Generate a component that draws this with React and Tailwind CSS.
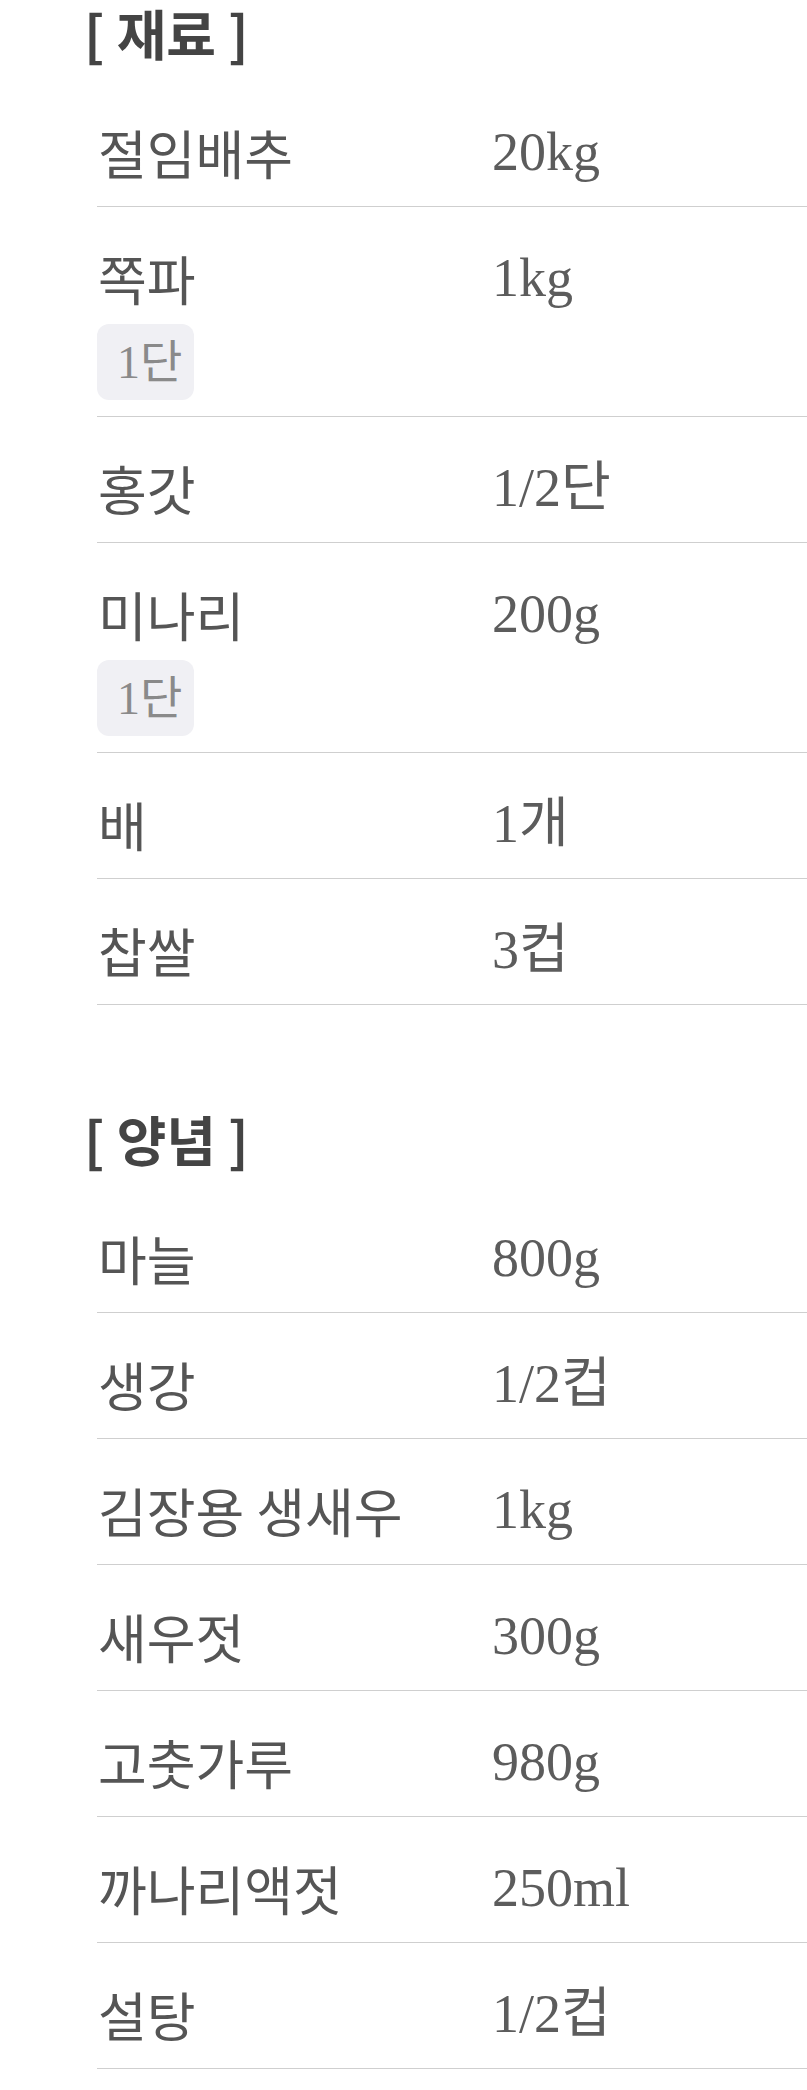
import React from "react"

const sections = [
  {
    title: "재료",
    items: [
      { name: "절임배추", amount: "20kg" },
      { name: "쪽파", amount: "1kg", note: "1단" },
      { name: "홍갓", amount: "1/2단" },
      { name: "미나리", amount: "200g", note: "1단" },
      { name: "배", amount: "1개" },
      { name: "찹쌀", amount: "3컵" },
    ],
  },
  {
    title: "양념",
    items: [
      { name: "마늘", amount: "800g" },
      { name: "생강", amount: "1/2컵" },
      { name: "김장용 생새우", amount: "1kg" },
      { name: "새우젓", amount: "300g" },
      { name: "고춧가루", amount: "980g" },
      { name: "까나리액젓", amount: "250ml" },
      { name: "설탕", amount: "1/2컵" },
    ],
  },
]

const sans = "font-['Noto_Sans_CJK_KR','Noto_Sans',sans-serif]"
const serif = "font-['Liberation_Serif','Noto_Sans_CJK_KR',serif]"

const IngredientRow = ({ item }) => (
  <li className="flex border-b border-[#cfcfcf] pt-[34px] pb-[16px]">
    <div className="w-[395px] shrink-0">
      <p className={`${sans} pl-[1px] text-[53px] leading-[75px] text-[#555555]`}>
        {item.name}
      </p>
      {item.note && (
        <span
          className={`${serif} mt-2 inline-flex h-[76px] w-[97px] items-center pl-[20px] rounded-xl bg-[#f0f0f4] text-[46px] text-[#8a8a8a]`}
        >
          {item.note}
        </span>
      )}
    </div>
    <p className={`${serif} text-[54px] leading-[75px] text-[#5c5c5c]`}>
      {item.amount}
    </p>
  </li>
)

export default function App() {
  return (
    <div className="min-h-[2090px] w-[807px] bg-white">
      {sections.map((section, idx) => (
        <section key={section.title} className={idx > 0 ? "mt-[101px]" : ""}>
          <h2
            className={`${sans} mb-[15px] pl-[84px] text-[54px] font-bold leading-[66px] text-[#444444]`}
          >
            [ {section.title} ]
          </h2>
          <ul className="ml-[97px]">
            {section.items.map((item) => (
              <IngredientRow key={item.name} item={item} />
            ))}
          </ul>
        </section>
      ))}
    </div>
  )
}
